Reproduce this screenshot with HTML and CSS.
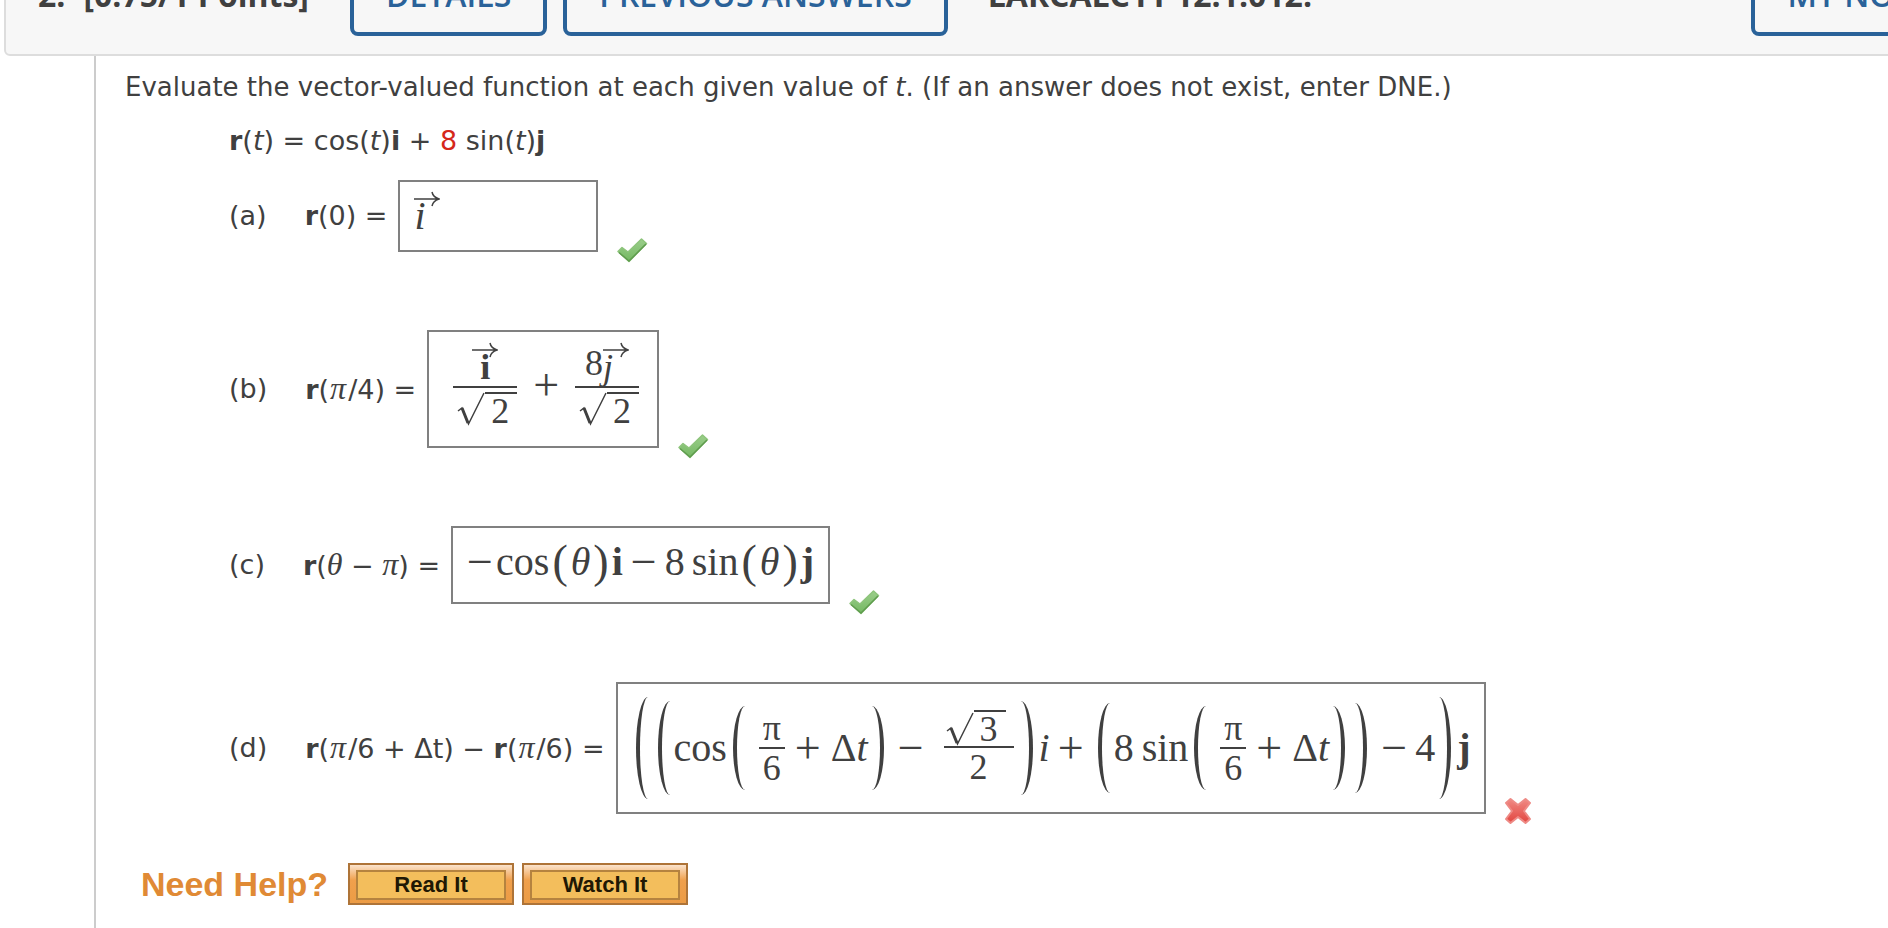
FILE: index.html
```html
<!DOCTYPE html>
<html lang="en">
<head>
<meta charset="utf-8">
<title>Vector-valued functions</title>
<link rel="stylesheet" href="styles.css">
</head>
<body>
<svg class="defs" width="0" height="0" aria-hidden="true">
  <defs>
    <linearGradient id="green" x1="0" y1="0" x2="0" y2="1"><stop offset="0" stop-color="#9bce8b"/><stop offset="1" stop-color="#74b862"/></linearGradient>
    <linearGradient id="red" x1="0" y1="0" x2="0" y2="1"><stop offset="0" stop-color="#f08a84"/><stop offset="1" stop-color="#e2453f"/></linearGradient>
  </defs>
  <symbol id="check" viewBox="0 0 32 26"><path d="M2 14.500 L6 10.500 L12 15 L25.500 2 L30.500 6.500 L13 24.500 Z" fill="url(#green)" stroke="#8dc47b" stroke-width="1.500" stroke-linejoin="round"/><path d="M3 15.500 L13 24 L30 7" fill="none" stroke="#5f9c4e" stroke-width="1.500"/></symbol>
  <symbol id="cross" viewBox="0 0 28 28"><path d="M6.500 2 L14 8 L21.500 2 L26 6 L20 14 L26 22 L21.500 26 L14 20 L6.500 26 L2 22 L8 14 L2 6 Z" fill="url(#red)" stroke="#ee8a85" stroke-width="2" stroke-linejoin="round"/></symbol>
  <symbol id="arrow" viewBox="0 0 26 16"><path d="M0 8 H25 M18 1 Q19 6 25 8 Q19 10 18 15" fill="none" stroke="currentColor" stroke-width="1.500"/></symbol>
  <symbol id="radical" viewBox="0 0 28 34"><path d="M1 19 L5 16 L11.500 32 L27 1" fill="none" stroke="currentColor" stroke-width="1.500"/><path d="M5 16 L11 31" fill="none" stroke="currentColor" stroke-width="3"/></symbol>
</svg>

<header class="bar">
  <span class="number">2.</span>
  <span class="points">[0.75/1 Points]</span>
  <button class="action" type="button">DETAILS</button>
  <button class="action previous" type="button">PREVIOUS ANSWERS</button>
  <span class="source">LARCALC11 12.1.012.</span>
  <button class="action notes" type="button">MY NOTES</button>
</header>

<main class="question">
  <p class="prompt">Evaluate the vector-valued function at each given value of <i>t</i>. (If an answer does not exist, enter DNE.)</p>
  <div class="work">
    <p class="given"><b>r</b>(<i>t</i>) = cos(<i>t</i>)<b>i</b> + <span class="value">8</span> sin(<i>t</i>)<b>j</b></p>

    <div class="part">
      <span class="label">(a)</span><span class="lhs"><b>r</b>(0) =</span>
      <div class="answer short" role="math" aria-label="vector i">
        <span class="vector"><svg class="arrow"><use href="#arrow"/></svg><i>i</i></span>
      </div>
      <svg class="mark" role="img" aria-label="Correct"><use href="#check"/></svg>
    </div>

    <div class="part">
      <span class="label">(b)</span><span class="lhs"><b>r</b>(<i class="sym pi">π</i>/4) =</span>
      <div class="answer fractions" role="math">
        <span class="frac"><span class="top"><span class="vector mid"><svg class="arrow"><use href="#arrow"/></svg><b>i</b></span></span><span class="bottom"><svg class="radical"><use href="#radical"/></svg><span class="under">2</span></span></span>
        <span class="sign">+</span>
        <span class="frac"><span class="top">8<span class="vector"><svg class="arrow"><use href="#arrow"/></svg><i>j</i></span></span><span class="bottom"><svg class="radical"><use href="#radical"/></svg><span class="under">2</span></span></span>
      </div>
      <svg class="mark" role="img" aria-label="Correct"><use href="#check"/></svg>
    </div>

    <div class="part">
      <span class="label">(c)</span><span class="lhs"><b>r</b>(<i class="sym">θ</i> − <i class="sym">π</i>) =</span>
      <div class="answer line" role="math">
        <span class="sign">−</span><span>cos</span><span class="fence">(</span><i>θ</i><span class="fence">)</span><b>i</b><span class="sign op">−</span><span>8</span><span class="fn">sin</span><span class="fence">(</span><i>θ</i><span class="fence">)</span><b>j</b>
      </div>
      <svg class="mark" role="img" aria-label="Correct"><use href="#check"/></svg>
    </div>

    <div class="part">
      <span class="label">(d)</span><span class="lhs"><b>r</b>(<i class="sym pi">π</i>/6 + Δt) − <b>r</b>(<i class="sym pi">π</i>/6) =</span>
      <div class="answer long" role="math">
        <span class="paren open h4"></span><span class="paren open h3"></span><span>cos</span><span class="paren open h1"></span>
        <span class="frac plain"><span class="top">π</span><span class="bottom">6</span></span><span class="sign op wide">+</span><span>Δ<i>t</i></span><span class="paren close h1"></span>
        <span class="sign op">−</span>
        <span class="frac root"><span class="top"><svg class="radical"><use href="#radical"/></svg><span class="under">3</span></span><span class="bottom">2</span></span><span class="paren close h3"></span>
        <i>i</i><span class="sign op">+</span><span class="paren open h2"></span><span>8</span><span class="fn">sin</span><span class="paren open h1"></span>
        <span class="frac plain"><span class="top">π</span><span class="bottom">6</span></span><span class="sign op wide">+</span><span>Δ<i>t</i></span><span class="paren close h1"></span><span class="paren close h2"></span>
        <span class="sign op">−</span><span>4</span><span class="paren close h4"></span><b>j</b>
      </div>
      <svg class="mark wrong" role="img" aria-label="Incorrect"><use href="#cross"/></svg>
    </div>
  </div>

  <div class="help">
    <span class="need">Need Help?</span>
    <button class="resource" type="button"><span>Read It</span></button>
    <button class="resource" type="button"><span>Watch It</span></button>
  </div>
</main>
</body>
</html>
```

FILE: styles.css
```css
* { box-sizing: border-box; }

body {
  display: flex;
  flex-direction: column;
  min-height: 100vh;
  margin: 0;
  overflow: hidden;
  background: #fff;
  color: #404040;
  font: 26px/32px "DejaVu Sans", Verdana, sans-serif;
}

p { margin: 0; }

.defs { position: absolute; }

/* Question header */
.bar {
  display: flex;
  align-items: baseline;
  margin: -58px -130px 0 4px;
  padding: 18px 32px;
  border: 2px solid #ddd;
  border-radius: 6px;
  background: #f7f7f7;
  font: bold 32px/36px "Open Sans", sans-serif;
  white-space: nowrap;
}

.points { margin-left: 18px; }

.action {
  margin-left: 41px;
  padding: 11px 32px 19px;
  border: 4px solid #2a6299;
  border-radius: 8px;
  background: transparent;
  color: #2a6299;
  font: 600 32px/36px "Open Sans", sans-serif;
}

.previous { margin-left: 16px; }

.source { margin-left: 40px; }

.notes { margin-left: auto; }

/* Question body */
.question {
  flex: 1;
  margin-left: 94px;
  padding: 15px 0 0 29px;
  border-left: 2px solid #ccc;
  white-space: nowrap;
}

.work {
  display: flex;
  flex-direction: column;
  gap: 78px;
  padding: 22px 0 0 104px;
  font-size: 27px;
}

.given { margin-bottom: -55px; }

.value { color: #d5281b; }

.sym { font-family: "Liberation Serif", serif; font-size: 32px; }

.pi { margin: 0 2px 0 1px; }

.part { display: flex; align-items: center; }

.lhs { margin: 0 11px 0 38px; }

.answer {
  display: flex;
  align-items: center;
  border: 2px solid #808080;
  font: 40px/44px "Liberation Serif", "Times New Roman", serif;
}

.mark {
  align-self: flex-end;
  width: 32px;
  height: 26px;
  margin: 0 0 -11px 18px;
}

.wrong { width: 28px; height: 28px; }

/* Formula pieces */
.vector {
  display: inline-flex;
  flex-direction: column;
  line-height: 30px;
}

.vector.mid { align-items: center; }

.arrow { width: 26px; height: 16px; margin-bottom: -6px; }

.radical { width: 28px; height: 34px; }

.frac {
  display: flex;
  flex-direction: column;
  align-items: stretch;
  font-size: 36px;
  line-height: 38px;
}

.top, .bottom { display: flex; justify-content: center; }

.top { align-items: flex-end; border-bottom: 2px solid; }

.under { border-top: 2px solid; padding: 0 8px 0 6px; line-height: 34px; }

.short { width: 200px; height: 72px; padding: 0 14px 10px; }

.fractions { gap: 16px; height: 118px; padding: 0 18px 8px 24px; }

.fractions .top { padding-bottom: 4px; }

.fractions .bottom { padding: 4px 0 0 4px; }

.line { gap: 3px; height: 78px; padding: 0 14px 6px; }

.fence { font-size: 46px; }

.sign { font-size: 46px; }

.op { margin: 0 8px; }

.wide { margin: 0 10px; }

.line .op { margin: 0 5px; }

.fn { margin-left: 8px; }

.line .fn { margin-left: 4px; }

.long { height: 132px; padding: 0 14px 0 12px; }

.plain { width: 26px; margin-left: 10px; }

.root { width: 70px; margin: 0 3px 0 12px; }

.root .top { justify-content: flex-start; padding-left: 2px; }

.paren { width: 12px; }

.open { margin: 0 4px 0 6px; border-left: 4px solid; border-radius: 100% 0 0 100% / 50% 0 0 50%; }

.close { margin: 0 6px 0 4px; border-right: 4px solid; border-radius: 0 100% 100% 0 / 0 50% 50% 0; }

.h1 { height: 84px; }
.h2 { height: 90px; }
.h3 { height: 94px; }
.h4 { height: 102px; }

/* Help links */
.help {
  display: flex;
  align-items: center;
  gap: 8px;
  padding: 49px 0 0 16px;
  font-family: "Liberation Sans", Arial, sans-serif;
}

.need { margin-right: 12px; color: #e08a35; font-size: 34px; font-weight: bold; }

.resource {
  width: 166px;
  height: 42px;
  padding: 5px 6px;
  border: 2px solid #ae7438;
  background: linear-gradient(#fbe3cc, #f0a04c 40%, #ec9c45);
  color: #201804;
  font: bold 22px/26px "Liberation Sans", Arial, sans-serif;
}

.resource span { display: block; border: 2px solid #b5833f; background: #f3be5c; }
```
